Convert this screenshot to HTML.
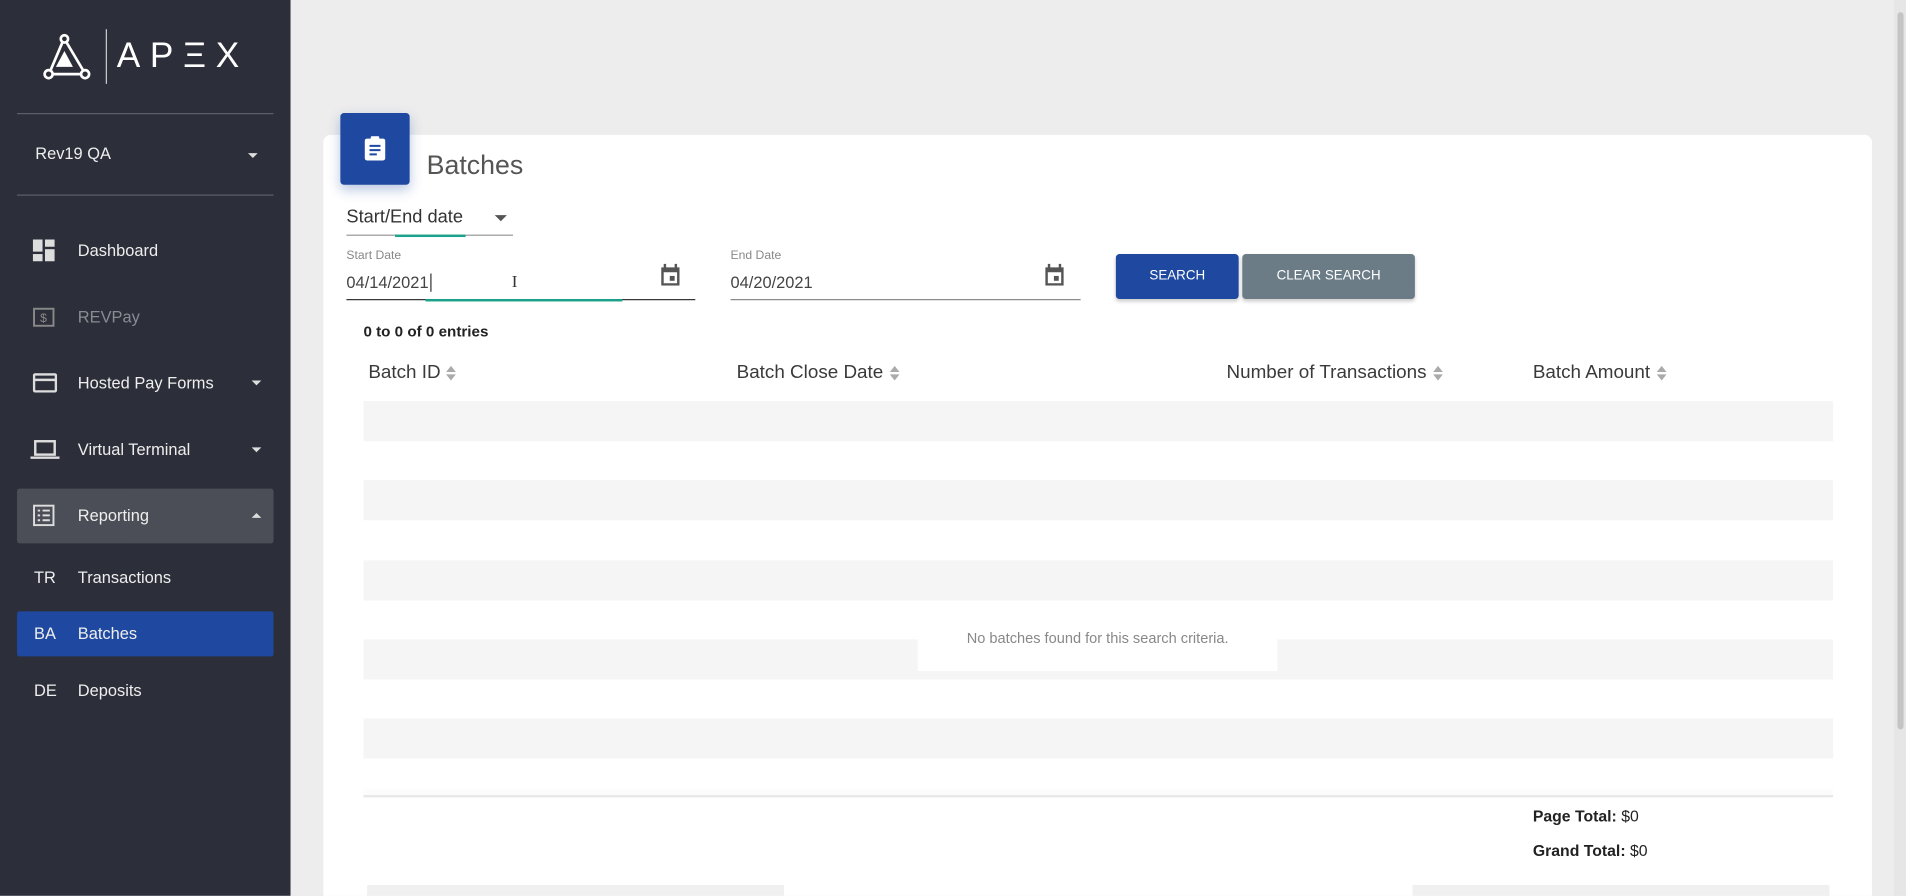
<!DOCTYPE html>
<html><head><meta charset="utf-8"><style>
*{box-sizing:border-box;margin:0;padding:0}
html,body{width:1906px;height:896px;overflow:hidden;background:#ececec;font-family:"Liberation Sans",sans-serif}
#w{position:absolute;left:0;top:0;width:1568px;height:737px;transform:scale(1.21556);transform-origin:0 0;background:#ededed;overflow:hidden}
.a{position:absolute}
#side{left:0;top:0;width:239px;height:737px;background:#2c2e39}
.hr{left:14px;width:211px;height:1px;background:#5c5e68}
.mi{left:64px;color:#eee;font-size:13.5px;transform:translateY(-50%)}
.ic{left:27px;transform:translateY(-50%)}
.car{width:0;height:0;border-left:4px solid transparent;border-right:4px solid transparent;border-top:4px solid #ddd}
.card{left:266px;top:111px;width:1274px;height:640px;background:#fff;border-radius:6px}
.row{left:299px;width:1209px;height:33px;background:#f5f5f5}
.hd{font-size:15.5px;color:#3a3a3a;transform:translateY(-50%)}
.so{display:inline-block;margin-left:5px;vertical-align:middle;width:8px;height:12px;position:relative}
.so:before{content:"";position:absolute;top:0;left:0;border-left:4px solid transparent;border-right:4px solid transparent;border-bottom:5px solid #aaa}
.so:after{content:"";position:absolute;bottom:0;left:0;border-left:4px solid transparent;border-right:4px solid transparent;border-top:5px solid #aaa}
</style></head><body><div id="w">
<div id="side" class="a">
 <svg class="a" style="left:32px;top:24px" width="46" height="44" viewBox="0 0 46 44" fill="none" stroke="#fff" stroke-width="2.2">
  <circle cx="21" cy="8" r="3"/><circle cx="8" cy="37" r="3.3"/><circle cx="38" cy="37" r="3.3"/>
  <path d="M19.5 10.5L9.5 34M22.5 10.5L36.5 34M11 37H35"/><path d="M21 18L28 31H14Z" fill="#fff" stroke="none"/>
 </svg>
 <div class="a" style="left:87px;top:24px;width:1px;height:45px;background:#ccc"></div>
 <div class="a" style="left:96px;top:30px;color:#fff;font-size:29px;letter-spacing:8px;font-weight:300">AP&#926;X</div>
 <div class="a hr" style="top:93px"></div>
 <div class="a" style="left:29px;top:119px;color:#eee;font-size:13.5px">Rev19 QA</div>
 <div class="a car" style="left:204px;top:126px"></div>
 <div class="a hr" style="top:160px"></div>
 <svg class="a ic" style="top:206px" width="18" height="18" viewBox="0 0 18 18" fill="#ddd"><rect x="0" y="0" width="8" height="10"/><rect x="10" y="0" width="8" height="6"/><rect x="0" y="12" width="8" height="6"/><rect x="10" y="8" width="8" height="10"/></svg>
 <div class="a mi" style="top:206px">Dashboard</div>
 <svg class="a ic" style="top:261px" width="18" height="16" viewBox="0 0 18 16" fill="none" stroke="#888" stroke-width="1.6"><rect x="1" y="1" width="16" height="14"/><text x="6" y="12" font-size="10" fill="#888" stroke="none">$</text></svg>
 <div class="a mi" style="top:261px;color:#8a8b92">REVPay</div>
 <svg class="a ic" style="top:315px" width="20" height="16" viewBox="0 0 20 16" fill="none" stroke="#ddd" stroke-width="2"><rect x="1" y="1" width="18" height="14" rx="1"/><path d="M1 5.5H19"/></svg>
 <div class="a mi" style="top:315px">Hosted Pay Forms</div>
 <div class="a car" style="left:207px;top:313px"></div>
 <svg class="a" style="left:25px;top:362px" width="24" height="16" viewBox="0 0 24 16" fill="none" stroke="#ddd" stroke-width="2"><rect x="4" y="1" width="16" height="11"/><path d="M0 14.5H24"/></svg>
 <div class="a mi" style="top:370px">Virtual Terminal</div>
 <div class="a car" style="left:207px;top:368px"></div>
 <div class="a" style="left:14px;top:402px;width:211px;height:45px;background:#4b4d57;border-radius:2px"></div>
 <svg class="a ic" style="top:424px" width="18" height="18" viewBox="0 0 18 18" fill="none" stroke="#ddd" stroke-width="1.6"><rect x="1" y="1" width="16" height="16"/><path d="M4 5h2M8 5h6M4 9h2M8 9h6M4 13h2M8 13h6"/></svg>
 <div class="a mi" style="top:424px">Reporting</div>
 <div class="a" style="left:207px;top:422px;border-left:4px solid transparent;border-right:4px solid transparent;border-bottom:4px solid #ddd"></div>
 <div class="a mi" style="left:28px;top:475px">TR</div><div class="a mi" style="top:475px">Transactions</div>
 <div class="a" style="left:14px;top:503px;width:211px;height:37px;background:#1f49a0;border-radius:2px"></div>
 <div class="a mi" style="left:28px;top:521px">BA</div><div class="a mi" style="top:521px">Batches</div>
 <div class="a mi" style="left:28px;top:568px">DE</div><div class="a mi" style="top:568px">Deposits</div>
</div>
<div class="a" style="left:1558px;top:0;width:10px;height:737px;background:#e6e6e6"></div>
<div class="a" style="left:1561px;top:10px;width:5px;height:590px;background:#c4c4c4;border-radius:3px"></div>
<div class="a card"></div>
<div class="a" style="left:280px;top:93px;width:57px;height:59px;background:#1f49a0;border-radius:3px;box-shadow:0 4px 10px rgba(31,73,160,.3)"></div>
<svg class="a" style="left:300px;top:112px" width="17" height="20" viewBox="0 0 17 20" fill="#fff"><rect x="0" y="2" width="17" height="18" rx="2"/><rect x="5" y="0" width="7" height="4" rx="1"/><path d="M4 8h9M4 11.5h9M4 15h6" stroke="#1f49a0" stroke-width="1.6"/></svg>
<div class="a" style="left:351px;top:123px;font-size:22px;color:#555">Batches</div>
<div class="a" style="left:285px;top:170px;font-size:15px;color:#333">Start/End date</div>
<div class="a" style="left:407px;top:177px;border-left:5px solid transparent;border-right:5px solid transparent;border-top:5px solid #555"></div>
<div class="a" style="left:285px;top:193px;width:137px;height:1px;background:#999"></div>
<div class="a" style="left:325px;top:193px;width:58px;height:2px;background:#1aa38a"></div>
<div class="a" style="left:285px;top:205px;font-size:10px;color:#888">Start Date</div>
<div class="a" style="left:285px;top:225px;font-size:13.5px;color:#444">04/14/2021<span style="border-left:1px solid #333;margin-left:1px"></span></div>
<div class="a" style="left:421px;top:225px;font-size:14px;color:#333;font-family:'Liberation Serif',serif">I</div>
<div class="a" style="left:285px;top:246px;width:287px;height:1px;background:#333"></div>
<div class="a" style="left:350px;top:246px;width:162px;height:2px;background:#1aa38a"></div>
<div class="a" style="left:601px;top:205px;font-size:10px;color:#888">End Date</div>
<div class="a" style="left:601px;top:225px;font-size:13.5px;color:#444">04/20/2021</div>
<div class="a" style="left:601px;top:246px;width:288px;height:1px;background:#888"></div>
<svg class="a" style="left:543px;top:217px" width="17" height="18" viewBox="0 0 17 18" fill="#555"><path d="M1 3h15v15H1z M3 7v9h11V7z" fill-rule="evenodd"/><rect x="3" y="0" width="2" height="4"/><rect x="12" y="0" width="2" height="4"/><rect x="8" y="10" width="4" height="4"/></svg>
<svg class="a" style="left:859px;top:217px" width="17" height="18" viewBox="0 0 17 18" fill="#555"><path d="M1 3h15v15H1z M3 7v9h11V7z" fill-rule="evenodd"/><rect x="3" y="0" width="2" height="4"/><rect x="12" y="0" width="2" height="4"/><rect x="8" y="10" width="4" height="4"/></svg>
<div class="a" style="left:918px;top:209px;width:101px;height:37px;background:#1f49a0;border-radius:3px;color:#fff;font-size:11px;text-align:center;line-height:37px;box-shadow:0 2px 3px rgba(0,0,0,.2)">SEARCH</div>
<div class="a" style="left:1022px;top:209px;width:142px;height:37px;background:#6b7c87;border-radius:3px;color:#fff;font-size:11px;text-align:center;line-height:37px;box-shadow:0 2px 3px rgba(0,0,0,.2)">CLEAR SEARCH</div>
<div class="a" style="left:299px;top:266px;font-size:12.5px;color:#222;font-weight:bold">0 to 0 of 0 entries</div>
<div class="a hd" style="left:303px;top:307px">Batch ID<span class="so"></span></div>
<div class="a hd" style="left:606px;top:307px">Batch Close Date<span class="so"></span></div>
<div class="a hd" style="left:1009px;top:307px">Number of Transactions<span class="so"></span></div>
<div class="a hd" style="left:1261px;top:307px">Batch Amount<span class="so"></span></div>
<div class="a row" style="top:330px"></div><div class="a row" style="top:395px"></div><div class="a row" style="top:461px"></div><div class="a row" style="top:526px"></div><div class="a row" style="top:591px"></div>
<div class="a" style="left:299px;top:654px;width:1209px;height:2px;background:#e8e8e8;box-shadow:0 -3px 5px rgba(0,0,0,.06)"></div>
<div class="a" style="left:755px;top:508px;width:296px;height:44px;background:#fff;text-align:center;padding-top:10px;font-size:12px;color:#888">No batches found for this search criteria.</div>
<div class="a" style="left:1261px;top:664px;font-size:13px;color:#222"><b>Page Total:</b> $0</div>
<div class="a" style="left:1261px;top:692px;font-size:13px;color:#222"><b>Grand Total:</b> $0</div>
<div class="a" style="left:302px;top:728px;width:343px;height:12px;background:#f0f0f0"></div>
<div class="a" style="left:1162px;top:728px;width:343px;height:12px;background:#f0f0f0"></div>
</div></body></html>
